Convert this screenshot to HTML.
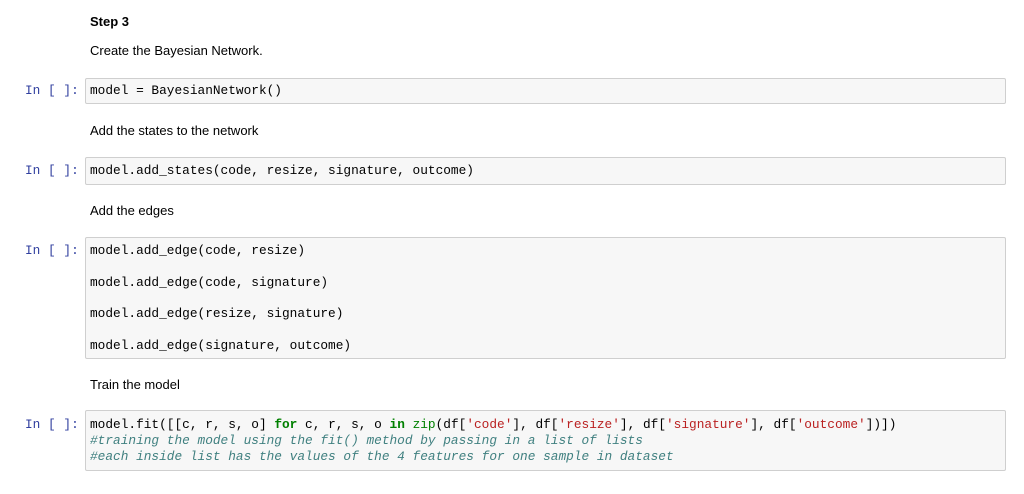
<!DOCTYPE html>
<html><head><style>
body{margin:0;background:#fff;width:1024px;height:494px;position:relative;overflow:hidden;font-family:"Liberation Sans",sans-serif;}
.t{position:absolute;left:90px;font-size:13px;color:#000;line-height:16px;}
.p{position:absolute;left:25px;font-family:"Liberation Mono",monospace;font-size:12.8px;color:#303f9f;line-height:16px;}
.b{position:absolute;left:85px;width:921px;background:#f7f7f7;border:1px solid #cfcfcf;border-radius:2px;box-sizing:border-box;}
.c{position:absolute;left:90px;font-family:"Liberation Mono",monospace;font-size:12.8px;color:#000;line-height:16px;white-space:pre;}
.k{color:#008000;font-weight:bold}.s{color:#ba2121}.bi{color:#008000}.cm{color:#408080;font-style:italic}
</style></head><body>
<div class="t" style="top:14px;font-weight:bold">Step 3</div>
<div class="t" style="top:43px">Create the Bayesian Network.</div>
<div class="b" style="top:78px;height:26px"></div>
<div class="p" style="top:83px">In [ ]:</div>
<div class="c" style="top:83px">model = BayesianNetwork()</div>
<div class="t" style="top:123px">Add the states to the network</div>
<div class="b" style="top:157px;height:28px"></div>
<div class="p" style="top:163px">In [ ]:</div>
<div class="c" style="top:163px">model.add_states(code, resize, signature, outcome)</div>
<div class="t" style="top:203px">Add the edges</div>
<div class="b" style="top:237px;height:122px"></div>
<div class="p" style="top:243px">In [ ]:</div>
<div class="c" style="top:243px">model.add_edge(code, resize)</div>
<div class="c" style="top:275px">model.add_edge(code, signature)</div>
<div class="c" style="top:306px">model.add_edge(resize, signature)</div>
<div class="c" style="top:338px">model.add_edge(signature, outcome)</div>
<div class="t" style="top:377px">Train the model</div>
<div class="b" style="top:410px;height:61px"></div>
<div class="p" style="top:417px">In [ ]:</div>
<div class="c" style="top:417px">model.fit([[c, r, s, o] <span class="k">for</span> c, r, s, o <span class="k">in</span> <span class="bi">zip</span>(df[<span class="s">'code'</span>], df[<span class="s">'resize'</span>], df[<span class="s">'signature'</span>], df[<span class="s">'outcome'</span>])])</div>
<div class="c cm" style="top:433px">#training the model using the fit() method by passing in a list of lists</div>
<div class="c cm" style="top:449px">#each inside list has the values of the 4 features for one sample in dataset</div>
</body></html>
